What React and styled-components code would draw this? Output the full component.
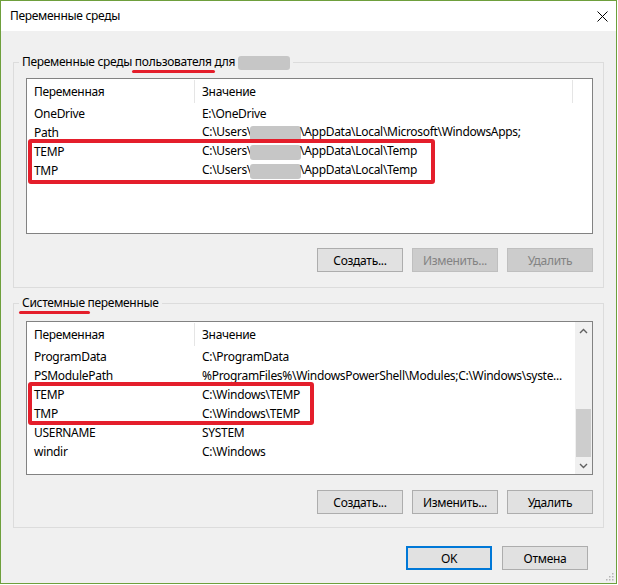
import React from "react";
import styled, { createGlobalStyle } from "styled-components";

const GlobalStyle = createGlobalStyle`
  html, body {
    margin: 0;
    padding: 0;
    background: #ffffff;
  }
  body {
    font-family: "Noto Sans", "Open Sans", sans-serif;
    font-size: 12px;
    letter-spacing: -0.3px;
    color: #000000;
  }
  * {
    box-sizing: border-box;
  }
`;

const Window = styled.div`
  position: relative;
  width: 617px;
  height: 584px;
  border: 1px solid #6e9f3c;
  background: #f0f0f0;
  display: flex;
  flex-direction: column;
`;

const TitleBar = styled.div`
  height: 30px;
  flex: none;
  background: #ffffff;
  display: flex;
  align-items: center;
  justify-content: space-between;
  padding: 0 8px 0 9px;
`;

const Title = styled.span`
  line-height: 16px;
`;

const CloseButton = styled.button`
  border: none;
  background: none;
  padding: 0;
  width: 12px;
  height: 12px;
  display: flex;
  align-items: center;
  justify-content: center;
`;

const Body = styled.div`
  flex: 1;
  display: flex;
  flex-direction: column;
  padding: 23px 12px 0 12px;
`;

const Group = styled.fieldset`
  margin: ${({ $top }) => $top || 0}px 0 0 0;
  padding: ${({ $padTop }) => $padTop}px 10px ${({ $padBottom }) => $padBottom}px 12px;
  border: 1px solid #dcdcdc;
  min-width: 0;
`;

const Legend = styled.legend`
  margin-left: -7px;
  padding: 0 3px;
  line-height: 16px;
  white-space: nowrap;
`;

const Marked = styled.span`
  position: relative;

  &::after {
    content: "";
    position: absolute;
    left: ${({ $left }) => $left}px;
    right: ${({ $right }) => $right}px;
    bottom: -3px;
    height: 3px;
    border-radius: 2px;
    background: #e41e2b;
  }
`;

const Redacted = styled.span`
  display: inline-block;
  width: ${({ $w }) => $w}px;
  height: ${({ $h }) => $h}px;
  background: #c6c6c6;
  border-radius: 3px;
  vertical-align: middle;
  margin: 0 ${({ $gap }) => $gap || 0}px;
`;

const ListBox = styled.div`
  position: relative;
  height: ${({ $h }) => $h}px;
  border: 1px solid #828282;
  background: #ffffff;
  display: flex;
`;

const Table = styled.div`
  flex: 1;
  min-width: 0;
`;

const HeaderRow = styled.div`
  height: 25px;
  display: flex;
  align-items: stretch;
`;

const HeaderCell = styled.div`
  width: ${({ $w }) => ($w ? `${$w}px` : "auto")};
  flex: ${({ $w }) => ($w ? "none" : "1")};
  margin: 1px 0 1px;
  padding-left: 7px;
  display: flex;
  align-items: center;
  border-right: ${({ $sep }) => ($sep ? "1px solid #e5e5e5" : "none")};
  white-space: nowrap;
`;

const Row = styled.div`
  height: 19px;
  display: flex;
  align-items: center;
`;

const Cell = styled.div`
  width: ${({ $w }) => ($w ? `${$w}px` : "auto")};
  flex: ${({ $w }) => ($w ? "none" : "1")};
  padding-left: 7px;
  white-space: nowrap;
  overflow: hidden;
  line-height: 16px;
`;

const Highlight = styled.div`
  position: absolute;
  left: ${({ $x }) => $x}px;
  top: ${({ $y }) => $y}px;
  width: ${({ $w }) => $w}px;
  height: ${({ $h }) => $h}px;
  border: 4px solid #e41e2b;
  border-radius: 3px;
  pointer-events: none;
`;

const ScrollBar = styled.div`
  width: 17px;
  flex: none;
  background: #f0f0f0;
  display: flex;
  flex-direction: column;
`;

const ScrollArrow = styled.div`
  height: 17px;
  flex: none;
  display: flex;
  align-items: center;
  justify-content: center;
`;

const ScrollTrack = styled.div`
  flex: 1;
  display: flex;
  flex-direction: column;
  justify-content: flex-end;
  padding: 0 1px;
`;

const ScrollThumb = styled.div`
  height: 48px;
  background: #cdcdcd;
`;

const ButtonRow = styled.div`
  margin-top: ${({ $top }) => $top}px;
  display: flex;
  justify-content: flex-end;
  gap: ${({ $gap }) => $gap || 9}px;
  padding-right: ${({ $right }) => $right || 0}px;
`;

const Button = styled.button`
  width: 86px;
  height: 24px;
  padding: 0;
  font-family: inherit;
  font-size: inherit;
  letter-spacing: inherit;
  color: ${({ disabled }) => (disabled ? "#838383" : "#000000")};
  background: ${({ disabled }) => (disabled ? "#cccccc" : "#e1e1e1")};
  border: ${({ $primary, disabled }) =>
    $primary ? "2px solid #0078d7" : disabled ? "1px solid #bfbfbf" : "1px solid #adadad"};
`;

const Grip = styled.svg`
  position: absolute;
  right: 2px;
  bottom: 2px;
`;

const Chevron = ({ up }) => (
  <svg width="9" height="6" viewBox="0 0 9 6">
    <path
      d={up ? "M1 5 L4.5 1.5 L8 5" : "M1 1 L4.5 4.5 L8 1"}
      fill="none"
      stroke="#606060"
      strokeWidth="1.4"
    />
  </svg>
);

const userRows = [
  { name: "OneDrive", value: "E:\\OneDrive" },
  { name: "Path", value: "\\AppData\\Local\\Microsoft\\WindowsApps;", hidden: true },
  { name: "TEMP", value: "\\AppData\\Local\\Temp", hidden: true },
  { name: "TMP", value: "\\AppData\\Local\\Temp", hidden: true },
];

const systemRows = [
  { name: "ProgramData", value: "C:\\ProgramData" },
  { name: "PSModulePath", value: "%ProgramFiles%\\WindowsPowerShell\\Modules;C:\\Windows\\syste..." },
  { name: "TEMP", value: "C:\\Windows\\TEMP" },
  { name: "TMP", value: "C:\\Windows\\TEMP" },
  { name: "USERNAME", value: "SYSTEM" },
  { name: "windir", value: "C:\\Windows" },
];

const Value = ({ row }) =>
  row.hidden ? (
    <>
      C:\Users\
      <Redacted $w={51} $h={15} $gap={-1} />
      {row.value}
    </>
  ) : (
    row.value
  );

const VarTable = ({ rows, trailing }) => (
  <Table>
    <HeaderRow>
      <HeaderCell $w={168} $sep>Переменная</HeaderCell>
      <HeaderCell $sep={trailing}>Значение</HeaderCell>
      {trailing && <HeaderCell $w={19} />}
    </HeaderRow>
    {rows.map((row, i) => (
      <Row key={i}>
        <Cell $w={168}>{row.name}</Cell>
        <Cell>
          <Value row={row} />
        </Cell>
      </Row>
    ))}
  </Table>
);

export default function App() {
  return (
    <>
      <GlobalStyle />
      <Window>
        <TitleBar>
          <Title>Переменные среды</Title>
          <CloseButton aria-label="Закрыть">
            <svg width="11" height="11" viewBox="0 0 11 11">
              <path d="M0.5 0.5 L10.5 10.5 M10.5 0.5 L0.5 10.5" stroke="#000" strokeWidth="1" />
            </svg>
          </CloseButton>
        </TitleBar>

        <Body>
          <Group $padTop={8} $padBottom={15}>
            <Legend>
              Переменные среды <Marked $left={-3} $right={-3}>пользователя</Marked> для{" "}
              <Redacted $w={52} $h={14} />
            </Legend>
            <ListBox $h={156}>
              <VarTable rows={userRows} trailing />
              <Highlight $x={1} $y={60} $w={407} $h={45} />
            </ListBox>
            <ButtonRow $top={14}>
              <Button>Создать...</Button>
              <Button disabled>Изменить...</Button>
              <Button disabled>Удалить</Button>
            </ButtonRow>
          </Group>

          <Group $top={7} $padTop={10} $padBottom={13}>
            <Legend>
              <Marked $left={-3} $right={-5}>Системные</Marked> переменные
            </Legend>
            <ListBox $h={154}>
              <VarTable rows={systemRows} />
              <ScrollBar>
                <ScrollArrow>
                  <Chevron up />
                </ScrollArrow>
                <ScrollTrack>
                  <ScrollThumb />
                </ScrollTrack>
                <ScrollArrow>
                  <Chevron />
                </ScrollArrow>
              </ScrollBar>
              <Highlight $x={1} $y={60} $w={286} $h={43} />
            </ListBox>
            <ButtonRow $top={15}>
              <Button>Создать...</Button>
              <Button>Изменить...</Button>
              <Button>Удалить</Button>
            </ButtonRow>
          </Group>

          <ButtonRow $top={18} $gap={10} $right={16}>
            <Button $primary>OK</Button>
            <Button>Отмена</Button>
          </ButtonRow>
        </Body>

        <Grip width="8" height="8" viewBox="0 0 8 8">
          <g fill="#b4b4b4">
            <rect x="6" y="0" width="1.5" height="1.5" />
            <rect x="3" y="3" width="1.5" height="1.5" />
            <rect x="6" y="3" width="1.5" height="1.5" />
            <rect x="0" y="6" width="1.5" height="1.5" />
            <rect x="3" y="6" width="1.5" height="1.5" />
            <rect x="6" y="6" width="1.5" height="1.5" />
          </g>
        </Grip>
      </Window>
    </>
  );
}
